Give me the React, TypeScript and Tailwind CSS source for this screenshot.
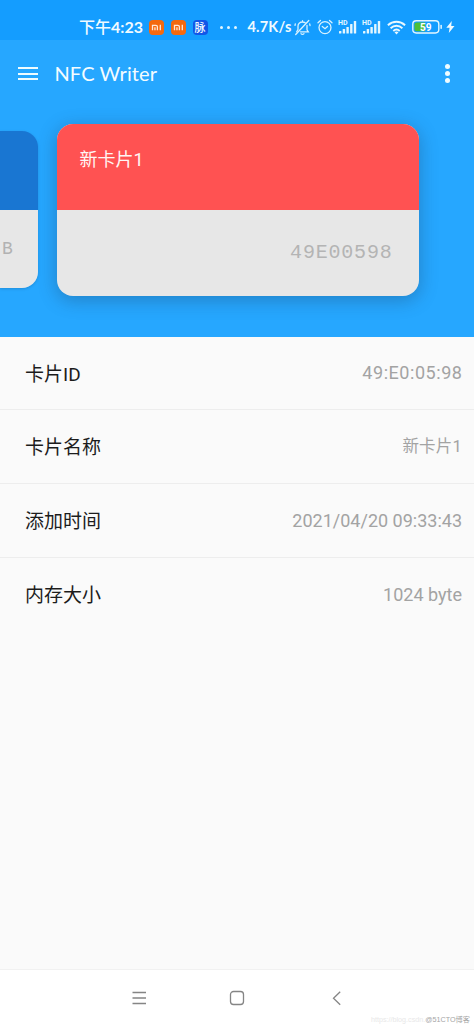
import { clsx } from 'clsx';

const DETAILS = [
  { label: '卡片ID', value: '49:E0:05:98', valueClass: 'text-lg tracking-[0.55px] -mr-[0.5px]' },
  { label: '卡片名称', value: '新卡片1', valueClass: 'text-[16.5px] tracking-[0.2px] pt-[3px]' },
  { label: '添加时间', value: '2021/04/20 09:33:43', valueClass: 'text-lg' },
  { label: '内存大小', value: '1024 byte', valueClass: 'text-lg' },
];

const MiBadge = () => (
  <svg width="15" height="15" viewBox="0 0 15 15" className="shrink-0">
    <rect width="15" height="15" rx="4" fill="#f4690f" />
    <path
      d="M3.5 10.200V5.300h3.300c1 0 1.600.5 1.600 1.500v3.400M5.950 7.200v3M11.300 4.700v5.500"
      fill="none"
      stroke="#ffe9dc"
      strokeWidth="1.300"
    />
  </svg>
);

const MutedBell = () => (
  <svg width="17" height="17" viewBox="0 0 17 17" fill="none" stroke="#d9f2ff" strokeWidth="1.3" strokeLinecap="round">
    <path d="M4 10.5V7.2C4 4.7 5.800 3 8.500 3c1 0 2 .3 2.700.8M13 6.500v4.300l1.300 2H6.500M4 10.500l-1.300 2.300M7 14.700c.8 1 2.200 1 3 0M8.500 1.700V3" />
    <path d="M14.800 1.500 1.700 15.500M1 6.300l.3-1.500M16 6.500l-.3-1.600" />
  </svg>
);

const AlarmClock = () => (
  <svg width="16" height="16" viewBox="0 0 16 16" fill="none" stroke="#d9f2ff" strokeWidth="1.3" strokeLinecap="round">
    <circle cx="8" cy="8.6" r="6" />
    <path d="M5.3 7.5 8 9.7l2.5-2.2M1 3.7 3.5 1.5M15 3.7l-2.5-2.2" />
  </svg>
);

const Signal = () => (
  <svg width="19" height="17" viewBox="0 0 19 17" fill="#e3f6ff">
    <text x="0" y="6" fontSize="7" fontWeight="700" fontFamily="Roboto, sans-serif">
      HD
    </text>
    <rect x="1" y="12" width="2.400" height="2.500" rx="0.5" />
    <rect x="4.700" y="10" width="2.400" height="4.500" rx="0.5" />
    <rect x="8.400" y="8" width="2.400" height="6.500" rx="0.5" />
    <rect x="12.100" y="5" width="2.400" height="9.500" rx="0.5" />
    <rect x="15.800" y="2" width="2.400" height="12.500" rx="0.5" />
  </svg>
);

const Wifi = () => (
  <svg width="19" height="15" viewBox="0 0 19 15" fill="none" stroke="#e9f8ff" strokeWidth="1.9">
    <path d="M.9 5.2c5-4.6 12.2-4.6 17.2 0M3.6 8.2c3.5-3.2 8.3-3.2 11.8 0M6.3 11c2-1.8 4.4-1.8 6.4 0" />
    <path d="m7.5 12.2 2 2.3 2-2.3c-1.2-1-2.8-1-4 0Z" fill="#e9f8ff" stroke="none" />
  </svg>
);

const Battery = () => (
  <svg width="31" height="14" viewBox="0 0 31 14">
    <rect x="0.8" y="0.8" width="26" height="12.2" rx="3.4" fill="none" stroke="#e3f6ff" strokeWidth="1.4" />
    <path d="M5 2.5h8v8.800H5c-1.700 0-2.500-.8-2.500-2.200V4.700c0-1.400.8-2.200 2.500-2.200Z" fill="#4cbf36" />
    <rect x="28.400" y="4.800" width="1.500" height="4.200" rx="0.700" fill="#e3f6ff" />
    <text x="13.800" y="10.500" fontSize="10" fontWeight="700" fill="#fff" textAnchor="middle" fontFamily="Roboto, sans-serif">
      59
    </text>
  </svg>
);

const StatusBar = () => (
  <div className="flex h-10 items-center bg-[#149dff] pt-[14px] pl-[79px] text-[#f0faff]">
    <span className="w-[69.500px] font-[Lato,'Noto_Sans_CJK_SC',sans-serif] text-base leading-none font-bold whitespace-nowrap">
      <span className="font-medium">下午</span>4:23
    </span>
    <div className="flex shrink-0 gap-[7px]">
      <MiBadge />
      <MiBadge />
      <span className="flex size-[15px] items-center justify-center rounded bg-[#1256e8] font-['Noto_Sans_CJK_SC',sans-serif] text-[11px] leading-none font-medium">
        脉
      </span>
    </div>
    <div className="ml-3 flex w-[28px] shrink-0 gap-[4px]">
      <span className="size-[3px] rounded-full bg-[#e3f6ff]" />
      <span className="size-[3px] rounded-full bg-[#e3f6ff]" />
      <span className="size-[3px] rounded-full bg-[#e3f6ff]" />
    </div>
    <span className="w-[46px] shrink-0 font-[Lato,sans-serif] text-[14.500px] leading-none font-bold tracking-[0.200px] whitespace-nowrap">
      4.7K/s
    </span>
    <div className="flex shrink-0 items-center">
      <MutedBell />
      <span className="ml-[6px]">
        <AlarmClock />
      </span>
      <span className="ml-[5px]">
        <Signal />
      </span>
      <span className="ml-[5px]">
        <Signal />
      </span>
      <span className="ml-[6px]">
        <Wifi />
      </span>
      <span className="ml-[6px]">
        <Battery />
      </span>
      <svg width="9" height="12" viewBox="0 0 9 12" className="ml-[3px]" fill="#f0faff">
        <path d="M5.800 0 .3 6.700h3.300L2.800 12l5.700-7H5.200Z" />
      </svg>
    </div>
  </div>
);

const Toolbar = () => (
  <div className="flex h-[68px] items-center justify-between pr-[24.500px] pb-px pl-[17.500px]">
    <div className="flex items-center">
      <div className="flex w-[37px] flex-col gap-[3.500px]">
        <span className="h-[2px] w-[20px] bg-[#effcff]" />
        <span className="h-[2px] w-[20px] bg-[#effcff]" />
        <span className="h-[2px] w-[20px] bg-[#effcff]" />
      </div>
      <h1 className="pb-px font-[Lato,sans-serif] text-xl leading-none tracking-[0.100px] text-[#f4fcff]">NFC Writer</h1>
    </div>
    <div className="flex flex-col gap-[2.200px]">
      <span className="size-[5px] rounded-full bg-[#effcff]" />
      <span className="size-[5px] rounded-full bg-[#effcff]" />
      <span className="size-[5px] rounded-full bg-[#effcff]" />
    </div>
  </div>
);

const Cards = () => (
  <div className="flex items-start overflow-hidden pt-[15.500px] pb-10">
    <div className="mt-[7.500px] flex h-[157px] w-[38px] shrink-0 flex-col overflow-hidden rounded-r-2xl shadow-[0_1px_3px_rgba(0,0,0,0.15)]">
      <div className="h-[79px] bg-[#1976d2]" />
      <div className="flex flex-1 items-center bg-[#e7e7e7] pl-[2px] font-['Liberation_Mono',monospace] text-lg text-[#b2b2b2]">
        B
      </div>
    </div>
    <div className="ml-[18.500px] h-[172.500px] w-[362px] shrink-0 overflow-hidden rounded-2xl bg-[#e7e7e7] shadow-[0_4px_18px_1px_rgba(30,60,90,0.33)]">
      <div className="h-[86px] bg-[#ff5252] pt-[26px] pl-[23px] font-[Roboto,'Noto_Sans_CJK_SC',sans-serif] text-lg leading-[20px] text-[#fff6f4]">
        新卡片1
      </div>
      <div className="flex h-[86.500px] items-center justify-end pr-[26px] font-['Liberation_Mono',monospace] text-[20px] tracking-[0.800px] text-[#b4b4b4]">
        49E00598
      </div>
    </div>
  </div>
);

const NavBar = () => (
  <nav className="flex h-[58px] shrink-0 items-start border-t border-[#f1f1f1] bg-white pt-[20px] pl-[132px]">
    <svg width="215" height="16" viewBox="0 0 215 16" fill="none" stroke="#858585" strokeWidth="1.300">
      <path d="M.5 2.500h13.500M.5 8h13.500M.5 13.500h13.500" />
      <rect x="98.500" y="1.500" width="13" height="13" rx="3" />
      <path d="m208.200 1.800-6.700 6.500 6.700 6.500" />
    </svg>
  </nav>
);

export default function App() {
  return (
    <div className="relative flex h-[1027px] w-[474px] flex-col overflow-hidden bg-[#fafafa]">
      <header className="h-[336.500px] shrink-0 bg-[#26a7ff]">
        <StatusBar />
        <Toolbar />
        <Cards />
      </header>
      <dl className="flex-1 font-[Roboto,'Noto_Sans_CJK_SC',sans-serif]">
        {DETAILS.map(({ label, value, valueClass }, i) => (
          <div
            key={label}
            className={clsx(
              'flex h-[73.700px] items-center justify-between pr-3 pl-[25px]',
              i < DETAILS.length - 1 && 'border-b border-[#ededed]',
            )}
          >
            <dt className="pt-[4px] text-[19px] text-[#1c1c1c]">{label}</dt>
            <dd className={clsx('pt-px text-[#a3a3a3]', valueClass)}>{value}</dd>
          </div>
        ))}
      </dl>
      <NavBar />
      <div className="absolute right-1 bottom-[4px] flex font-['Liberation_Sans','Noto_Sans_CJK_SC',sans-serif] text-[7.200px] leading-none whitespace-nowrap">
        <span className="text-[#e8e8e8]">https://blog.csdn.</span>
        <span className="text-[#a5a5a5]">@51CTO博客</span>
      </div>
    </div>
  );
}
